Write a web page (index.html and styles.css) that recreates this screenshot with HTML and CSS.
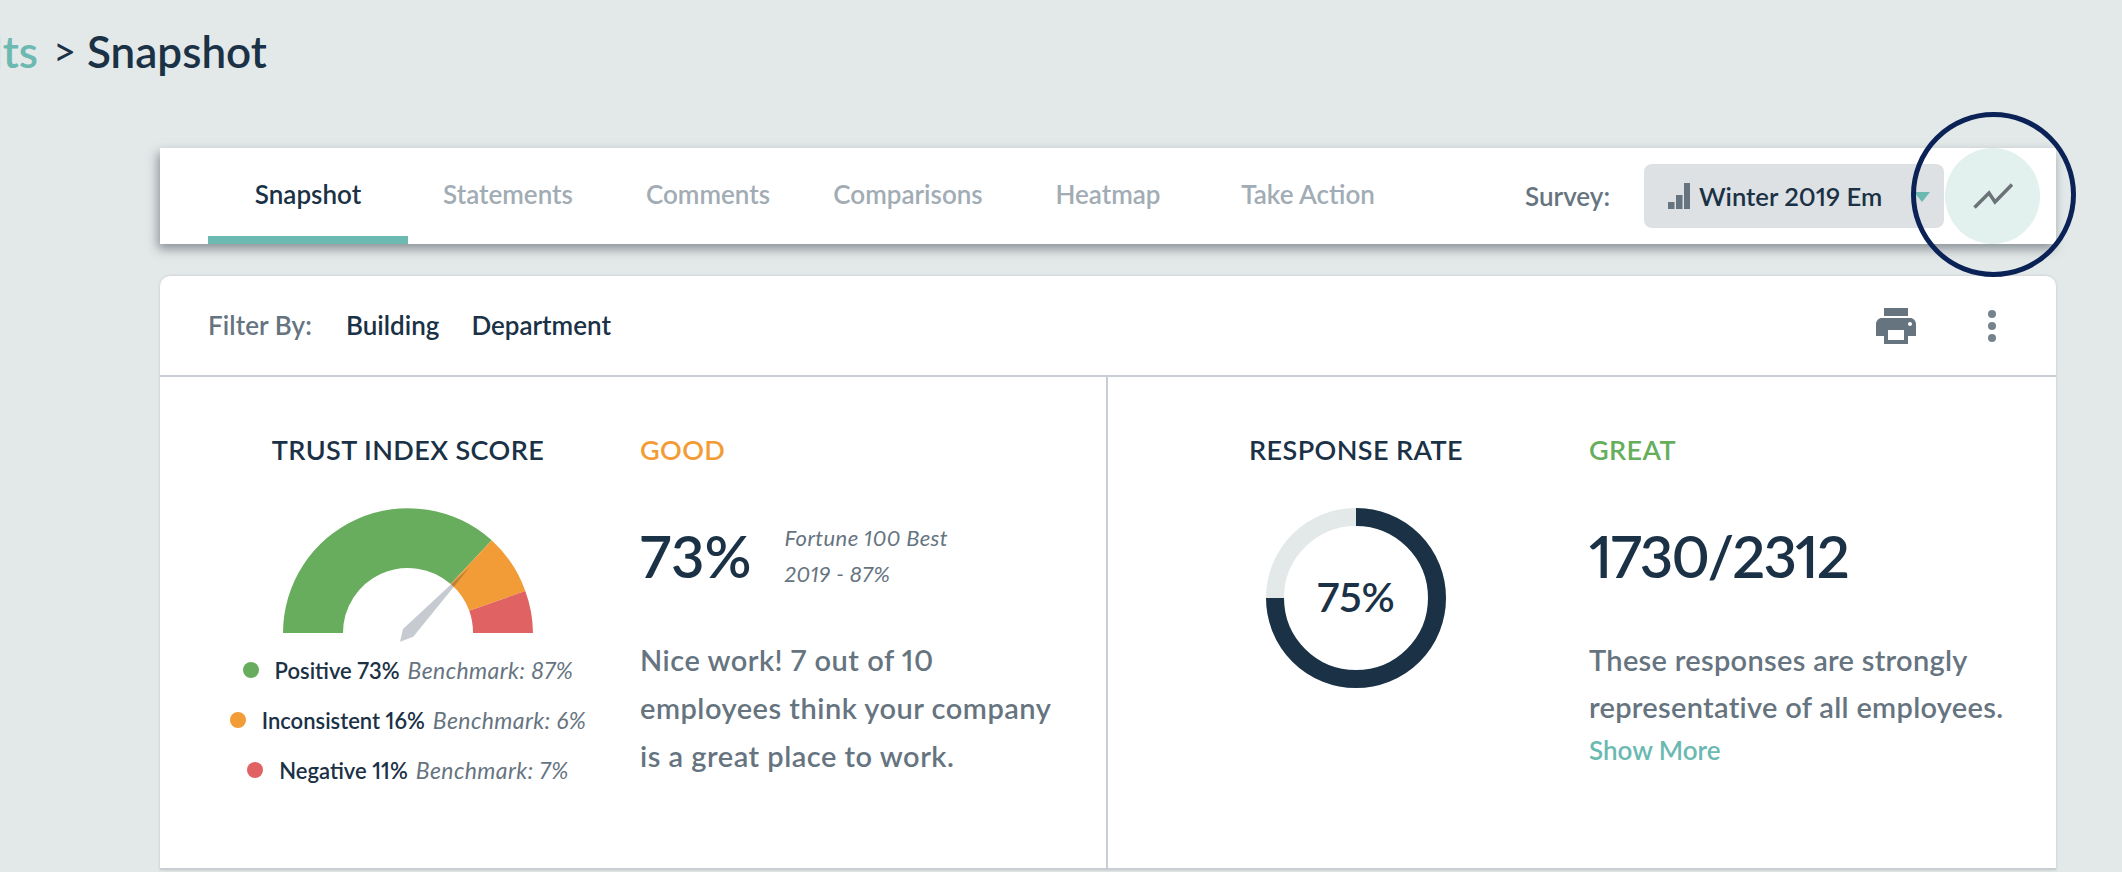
FILE: index.html
```html
<!DOCTYPE html>
<html lang="en">
<head>
<meta charset="utf-8">
<title>Snapshot</title>
<link rel="stylesheet" href="styles.css">
</head>
<body>
<header class="crumbs">
  <span class="crumb-clip"><a class="crumb-link">Results</a></span>
  <span class="crumb-sep">&gt;</span>
  <h1 class="crumb-now">Snapshot</h1>
</header>
<nav class="tabbar">
  <ul class="tabs">
    <li class="tab is-active">Snapshot</li>
    <li class="tab">Statements</li>
    <li class="tab">Comments</li>
    <li class="tab">Comparisons</li>
    <li class="tab">Heatmap</li>
    <li class="tab">Take Action</li>
  </ul>
  <span class="survey-label">Survey:</span>
  <div class="survey-select">
    <svg class="bars" viewBox="0 0 22 26" width="22" height="26"><rect x="0" y="19" width="6.500" height="7"/><rect x="8" y="12" width="6.500" height="14"/><rect x="16" y="0" width="6" height="26"/></svg>
    <span class="survey-name">Winter 2019 Employee Survey</span>
    <svg class="caret" viewBox="0 0 16 10" width="16" height="10"><path d="M0 0h16L8 10z"/></svg>
  </div>
  <button class="trend-btn">
    <svg viewBox="0 0 40 26" width="40" height="26"><path d="M1.500 24.500 16 10l6 9L39 1.500"/></svg>
  </button>
</nav>
<span class="ring"></span>
<main class="card">
  <div class="card-head">
    <span class="filter-label">Filter By:</span>
    <span class="filter">Building</span>
    <span class="filter">Department</span>
    <svg class="print" viewBox="0 0 24 24" width="48" height="48"><path d="M19 8H5c-1.660 0-3 1.340-3 3v6h4v4h12v-4h4v-6c0-1.660-1.340-3-3-3zm-3 11H8v-5h8v5zm3-7c-.55 0-1-.45-1-1s.45-1 1-1 1 .45 1 1-.45 1-1 1zm-1-9H6v4h12V3z"/></svg>
    <svg class="more" viewBox="0 0 8 32" width="8" height="32"><circle cx="4" cy="4" r="4"/><circle cx="4" cy="16" r="4"/><circle cx="4" cy="28" r="4"/></svg>
  </div>
  <div class="panels">
    <section class="panel panel-trust">
      <div class="col-chart">
        <h2 class="title">TRUST INDEX SCORE</h2>
        <svg class="gauge" viewBox="0 0 270 145" width="270" height="145">
          <path class="g-green" d="M10 133A125 125 0 0 1 218.700 40.300L177.700 84A65 65 0 0 0 70 133z"/>
          <path class="g-orange" d="M218.700 40.300A125 125 0 0 1 252.300 91L196.300 110.700A65 65 0 0 0 177.700 84z"/>
          <path class="g-red" d="M252.300 91A125 125 0 0 1 260 133H200A65 65 0 0 0 196.300 110.700z"/>
          <path class="g-needle" d="M197 66.700 130 129 127 141.700 140.300 136.700z"/>
        </svg>
        <ul class="legend">
          <li><i class="dot dot-green"></i><b>Positive 73%</b> <em>Benchmark: 87%</em></li>
          <li><i class="dot dot-orange"></i><b>Inconsistent 16%</b> <em>Benchmark: 6%</em></li>
          <li><i class="dot dot-red"></i><b>Negative 11%</b> <em>Benchmark: 7%</em></li>
        </ul>
      </div>
      <div class="col-text">
        <h2 class="title rating-good">GOOD</h2>
        <div class="stat-row">
          <span class="stat">73%</span>
          <p class="best">Fortune 100 Best<br>2019 - 87%</p>
        </div>
        <p class="body-text">Nice work! 7 out of 10 employees think your company is a great place to work.</p>
      </div>
    </section>
    <section class="panel panel-response">
      <div class="col-chart col-donut">
        <h2 class="title">RESPONSE RATE</h2>
        <div class="donut">
          <svg viewBox="0 0 180 180" width="180" height="180">
            <circle class="d-track" cx="90" cy="90" r="81"/>
            <path class="d-value" d="M90 9A81 81 0 1 1 9 90"/>
          </svg>
          <span class="donut-label">75%</span>
        </div>
      </div>
      <div class="col-text">
        <h2 class="title rating-great">GREAT</h2>
        <div class="stat-row"><span class="stat stat-count">1730/2312</span></div>
        <p class="body-text body-response">These responses are strongly representative of all employees.</p>
        <a class="show-more">Show More</a>
      </div>
    </section>
  </div>
</main>
</body>
</html>
```
FILE: styles.css
```css
* { box-sizing: border-box; }
html, body { margin: 0; height: 100%; }
body {
  background: #e3e8e8;
  color: #1a3146;
  font-family: Lato, "Open Sans", sans-serif;
  font-variant-numeric: proportional-nums;
  overflow: hidden;
  position: relative;
}
h1, h2, p, ul { margin: 0; padding: 0; }
ul { list-style: none; }

.crumbs { display: flex; align-items: center; height: 148px; padding-bottom: 46px; }
.crumb-clip { width: 38px; display: flex; justify-content: flex-end; overflow: hidden; flex: none; }
.crumb-link { color: #6bb9b1; font-size: 44px; font-weight: 600; }
.crumb-sep { margin-left: 15px; font-size: 40px; width: 34px; color: #1a3146; }
.crumb-now { font-size: 44px; font-weight: 600; }

.tabbar {
  display: flex;
  align-items: center;
  height: 96px;
  margin: 0 66px 0 160px;
  padding: 0 16px 0 48px;
  background: #fff;
  box-shadow: -2px 5px 10px rgba(50, 60, 70, .5);
}
.tabs { display: flex; align-self: stretch; }
.tab {
  width: 200px;
  display: flex;
  align-items: center;
  justify-content: center;
  font-size: 26px;
  font-weight: 600;
  color: #a1acb4;
  border-bottom: 8px solid transparent;
  padding-top: 4px;
}
.tab.is-active { color: #1a3146; border-bottom-color: #6bb9b1; }
.survey-label { margin-left: auto; font-size: 26px; font-weight: 600; color: #66747f; }
.survey-select {
  display: flex;
  align-items: center;
  width: 300px;
  height: 64px;
  margin-left: 34px;
  padding: 0 14px 0 24px;
  background: #dee1e4;
  border-radius: 8px;
}
.bars { fill: #66747f; flex: none; margin-right: 9px; }
.survey-name { width: 183px; overflow: hidden; white-space: nowrap; font-size: 25.600px; font-weight: 600; flex: none; }
.caret { fill: #6bb9b1; margin: 2px 0 0 auto; flex: none; }
.trend-btn {
  width: 95px;
  height: 96px;
  border: 0;
  padding: 0;
  margin-left: 1px;
  border-radius: 50%;
  background: #e2f0ee;
  display: flex;
  align-items: center;
  justify-content: center;
  flex: none;
}
.trend-btn path { fill: none; stroke: #6b7378; stroke-width: 3.500; }
.ring {
  position: absolute;
  left: 1911px;
  top: 112px;
  width: 165px;
  height: 165px;
  border: 5px solid #0b2257;
  border-radius: 50%;
}

.card {
  margin: 32px 66px 0 160px;
  background: #fff;
  border-radius: 10px 10px 0 0;
  box-shadow: 0 0 3px rgba(60, 70, 80, .2);
}
.card-head {
  display: flex;
  align-items: center;
  height: 101px;
  padding: 0 60px 0 48px;
  border-bottom: 2px solid #c8ced3;
}
.filter-label { font-size: 26px; font-weight: 600; color: #66747f; margin-right: 34px; padding-bottom: 2px; letter-spacing: .1px; }
.filter { font-size: 26px; font-weight: 600; margin-right: 32px; padding-bottom: 2px; }
.print { fill: #66747f; margin-left: auto; }
.more { fill: #76838d; margin-left: 68px; }
.panels { display: grid; grid-template-columns: 948px 1fr; height: 493px; border-bottom: 2px solid #c8ced3; }
.panel { display: flex; padding-top: 55px; }
.panel-trust { border-right: 2px solid #c8ced3; padding-left: 40px; }
.panel-response { padding-left: 118px; }
.col-chart { width: 416px; display: flex; flex-direction: column; align-items: center; flex: none; margin-right: 24px; }
.col-donut { width: 260px; margin-right: 103px; }
.title { font-size: 27px; font-weight: 600; line-height: 36px; white-space: nowrap; letter-spacing: .4px; }
.rating-good { color: #f39c36; }
.rating-great { color: #66ae5c; }
.gauge { margin-top: 32px; display: block; }
.g-green { fill: #68ad5d; }
.g-orange { fill: #f29c38; }
.g-red { fill: #e06262; }
.g-needle { fill: #1a3146; opacity: .25; }
.legend { display: flex; flex-direction: column; align-items: center; }
.legend li { display: flex; align-items: center; height: 50px; font-size: 22px; white-space: nowrap; }
.legend b { font-weight: 600; margin-right: 8px; }
.legend em { color: #66747f; font-style: italic; font-size: 23px; letter-spacing: .4px; }
.dot { width: 16px; height: 16px; border-radius: 50%; margin-right: 16px; }
.dot-green { background: #68ad5d; }
.dot-orange { background: #f29c38; }
.dot-red { background: #e06262; }
.col-text { flex: none; }
.stat-row { display: flex; align-items: center; margin-top: 52px; height: 72px; }
.stat { font-size: 58px; font-weight: 600; line-height: 72px; }
.stat-count { letter-spacing: -1.800px; }
.best { margin-left: 33px; font-size: 22px; font-style: italic; line-height: 36px; color: #66747f; letter-spacing: .4px; }
.body-text { width: 425px; margin-top: 44px; font-size: 29px; font-weight: 600; line-height: 48px; letter-spacing: .5px; color: #66747f; }
.body-response { width: 470px; line-height: 47px; letter-spacing: .3px; }
.show-more { display: block; font-size: 26px; font-weight: 600; line-height: 36px; color: #6bb9b1; margin-top: 2px; }
.donut { position: relative; width: 180px; height: 180px; margin-top: 40px; }
.donut svg { display: block; fill: none; stroke-width: 18; }
.d-track { stroke: #e3e8e8; }
.d-value { stroke: #1a3146; }
.donut-label { position: absolute; inset: 0; display: flex; align-items: center; justify-content: center; padding-bottom: 3px; font-size: 41px; font-weight: 600; }
```
